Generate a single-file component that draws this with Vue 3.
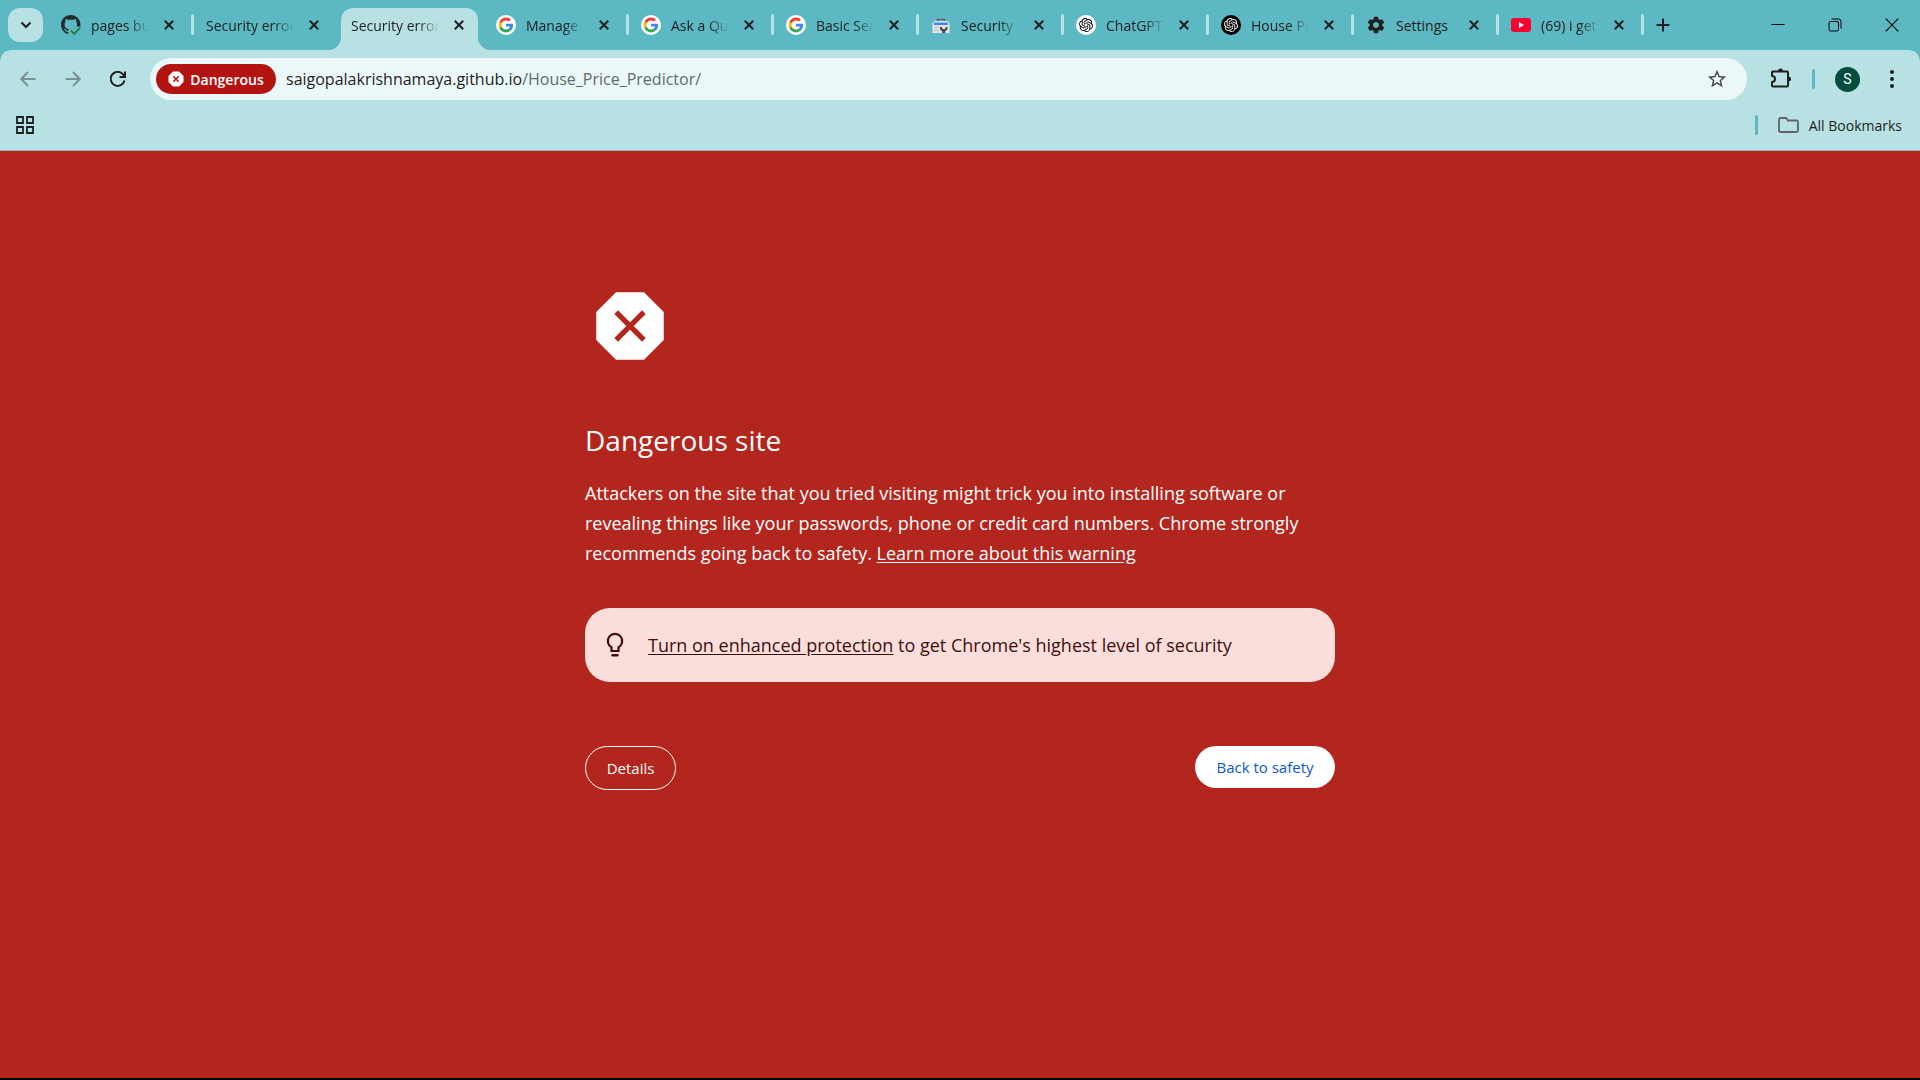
<template>
  <div class="browser">
    <header class="tab-strip">
      <button class="tab-search" aria-label="Search tabs">
        <svg width="12" height="8" viewBox="0 0 12 8"><path d="M1.5 1.5 6 6l4.5-4.5" fill="none" stroke="#1f1f1f" stroke-width="2" /></svg>
      </button>
      <nav class="tabs">
        <div
          v-for="(tab, index) in tabs"
          :key="index"
          class="tab"
          :class="{ active: index === activeTab, bare: index === activeTab - 1 || index === activeTab }"
          @click="activeTab = index"
        >
          <span v-if="tab.icon" class="favicon">
            <svg v-if="tab.icon === 'github'" viewBox="0 0 20 20">
              <path transform="scale(1.22)" d="M8 0C3.58 0 0 3.58 0 8c0 3.54 2.29 6.53 5.47 7.59.4.07.55-.17.55-.38 0-.19-.01-.82-.01-1.49-2.01.37-2.53-.49-2.69-.94-.09-.23-.48-.94-.82-1.13-.28-.15-.68-.52-.01-.53.63-.01 1.08.58 1.23.82.72 1.21 1.87.87 2.33.66.07-.52.28-.87.51-1.07-1.78-.2-3.64-.89-3.64-3.95 0-.87.31-1.59.82-2.15-.08-.2-.36-1.02.08-2.12 0 0 .67-.21 2.2.82.64-.18 1.32-.27 2-.27s1.36.09 2 .27c1.53-1.04 2.2-.82 2.2-.82.44 1.1.16 1.92.08 2.12.51.56.82 1.27.82 2.15 0 3.07-1.87 3.75-3.65 3.95.29.25.54.73.54 1.48 0 1.07-.01 1.93-.01 2.2 0 .21.15.46.55.38A8.01 8.01 0 0 0 16 8c0-4.42-3.58-8-8-8z" fill="#24292f" />
              <path d="M8.500 15.500 12 11.500h8V20H8.500z" fill="#5cb8c2" />
              <path d="m10 15.700 3.200 3.200 6-6.200" fill="none" stroke="#1a7f37" stroke-width="1.800" />
            </svg>
            <svg v-else-if="tab.icon === 'google'" viewBox="0 0 20 20">
              <circle cx="10" cy="10" r="10" fill="#fff" />
              <g transform="translate(2.600 2.600) scale(.308)">
                <path fill="#EA4335" d="M24 9.500c3.540 0 6.710 1.220 9.210 3.600l6.850-6.850C35.900 2.380 30.470 0 24 0 14.620 0 6.510 5.380 2.560 13.220l7.980 6.190C12.430 13.720 17.740 9.500 24 9.500z" />
                <path fill="#4285F4" d="M46.980 24.550c0-1.570-.15-3.090-.38-4.550H24v9.020h12.940c-.58 2.960-2.260 5.480-4.780 7.180l7.730 6c4.510-4.180 7.090-10.360 7.090-17.650z" />
                <path fill="#FBBC05" d="M10.530 28.590c-.48-1.450-.76-2.990-.76-4.590s.27-3.140.76-4.590l-7.980-6.190C.92 16.460 0 20.120 0 24s.92 7.540 2.560 10.780l7.970-6.190z" />
                <path fill="#34A853" d="M24 48c6.480 0 11.930-2.130 15.890-5.810l-7.730-6c-2.150 1.450-4.920 2.300-8.160 2.300-6.260 0-11.570-4.220-13.470-9.910l-7.980 6.190C6.510 42.620 14.620 48 24 48z" />
              </g>
            </svg>
            <svg v-else-if="tab.icon === 'console'" viewBox="0 0 20 20">
              <path d="M6.500 6.500V4.500h7v2" fill="none" stroke="#5f6368" stroke-width="1.500" />
              <path d="M3.500 6h13L18.500 8.500V18h-17V8.500z" fill="#e3e5e8" />
              <rect x="3" y="7.500" width="14" height="2.500" fill="#4285f4" />
              <path d="M3.500 12.500h4.500M3.500 15.500h4.500" stroke="#c3c6ca" stroke-width="1.500" />
              <path d="M9 12v2.500l2.200 1.800V18h3v-1.700l2.200-1.800V12h-2v2h-3.200v-2z" fill="#45484c" />
            </svg>
            <svg v-else-if="tab.icon === 'openai' || tab.icon === 'openai-dark'" viewBox="0 0 20 20">
              <circle cx="10" cy="10" r="10" :fill="tab.icon === 'openai' ? '#fff' : '#000'" />
              <path transform="translate(3 3) scale(.583)" :fill="tab.icon === 'openai' ? '#000' : '#fff'" d="M22.282 9.821a5.985 5.985 0 0 0-.516-4.911 6.046 6.046 0 0 0-6.510-2.900A6.065 6.065 0 0 0 4.981 4.182a5.985 5.985 0 0 0-3.998 2.900 6.046 6.046 0 0 0 .743 7.097 5.980 5.980 0 0 0 .511 4.911 6.051 6.051 0 0 0 6.515 2.900A5.985 5.985 0 0 0 13.260 24a6.056 6.056 0 0 0 5.772-4.206 5.990 5.990 0 0 0 3.998-2.900 6.056 6.056 0 0 0-.748-7.073zM13.260 22.430a4.476 4.476 0 0 1-2.876-1.041l.141-.080 4.779-2.758a.795.795 0 0 0 .393-.681v-6.737l2.020 1.169a.071.071 0 0 1 .038.052v5.583a4.504 4.504 0 0 1-4.495 4.493zM3.600 18.304a4.471 4.471 0 0 1-.535-3.014l.142.085 4.783 2.759a.771.771 0 0 0 .780 0l5.843-3.369v2.332a.080.080 0 0 1-.033.062L9.740 19.950a4.499 4.499 0 0 1-6.140-1.646zM2.341 7.896a4.485 4.485 0 0 1 2.365-1.973V11.600a.766.766 0 0 0 .388.677l5.814 3.354-2.020 1.169a.076.076 0 0 1-.071 0l-4.830-2.787A4.504 4.504 0 0 1 2.341 7.872zm16.596 3.856L13.104 8.364 15.119 7.200a.076.076 0 0 1 .071 0l4.830 2.791a4.494 4.494 0 0 1-.676 8.105v-5.678a.790.790 0 0 0-.407-.667zm2.011-3.023l-.142-.085-4.774-2.782a.776.776 0 0 0-.785 0L9.409 9.230V6.897a.066.066 0 0 1 .028-.061l4.830-2.787a4.499 4.499 0 0 1 6.681 4.660zM8.307 12.863l-2.020-1.164a.080.080 0 0 1-.038-.057V6.074a4.499 4.499 0 0 1 7.376-3.454l-.142.081L8.704 5.459a.795.795 0 0 0-.393.681zm1.097-2.365l2.602-1.500 2.607 1.500v2.999l-2.597 1.500-2.607-1.500z" />
            </svg>
            <svg v-else-if="tab.icon === 'settings'" viewBox="0 0 24 24">
              <path fill="#1f1f1f" d="M19.430 12.980c.04-.32.07-.64.07-.98s-.03-.66-.07-.98l2.110-1.650c.19-.15.24-.42.12-.64l-2-3.460c-.12-.22-.39-.3-.61-.22l-2.490 1c-.52-.4-1.080-.73-1.690-.98l-.38-2.650A.488.488 0 0 0 14 2h-4c-.25 0-.46.18-.49.42l-.38 2.650c-.61.25-1.170.59-1.690.98l-2.490-1c-.23-.09-.49 0-.61.22l-2 3.460c-.13.22-.07.49.12.64l2.110 1.650c-.04.32-.07.65-.07.98s.03.66.07.98l-2.110 1.650c-.19.15-.24.42-.12.64l2 3.460c.12.22.39.3.61.22l2.490-1c.52.4 1.080.73 1.690.98l.38 2.650c.03.24.24.42.49.42h4c.25 0 .46-.18.49-.42l.38-2.650c.61-.25 1.170-.59 1.690-.98l2.490 1c.23.09.49 0 .61-.22l2-3.460c.12-.22.07-.49-.12-.64l-2.110-1.650zM12 15.500c-1.930 0-3.500-1.570-3.500-3.500s1.570-3.500 3.500-3.500 3.500 1.570 3.500 3.500-1.570 3.500-3.500 3.500z" />
            </svg>
            <svg v-else viewBox="0 0 20 20">
              <rect y="3" width="20" height="14" rx="3" fill="#ff0033" />
              <path d="M8 7v6l5-3z" fill="#fff" />
            </svg>
          </span>
          <span class="tab-title" :class="{ fade: !tab.fits }">{{ tab.title }}</span>
          <button class="tab-close" aria-label="Close tab">
            <svg width="10" height="10" viewBox="0 0 10 10"><path d="M.8.8l8.400 8.400M9.200.8.8 9.200" stroke="#1f1f1f" stroke-width="2" /></svg>
          </button>
        </div>
      </nav>
      <button class="new-tab" aria-label="New tab">
        <svg width="14" height="14" viewBox="0 0 14 14"><path d="M7 .5v13M.5 7h13" stroke="#1f1f1f" stroke-width="2" /></svg>
      </button>
      <div class="window-controls">
        <button aria-label="Minimize">
          <svg width="14" height="14" viewBox="0 0 14 14"><path d="M.5 6.500h13" stroke="#000" /></svg>
        </button>
        <button aria-label="Restore">
          <svg width="14" height="14" viewBox="0 0 14 14" fill="none" stroke="#000"><rect x="1" y="3.500" width="9.500" height="9.500" rx="1.500" /><path d="M3.500 1h7A2.500 2.500 0 0 1 13 3.500v7" /></svg>
        </button>
        <button aria-label="Close window">
          <svg width="14" height="14" viewBox="0 0 14 14"><path d="M.7.7l12.600 12.600M13.300.7.7 13.300" stroke="#000" stroke-width="1.100" /></svg>
        </button>
      </div>
    </header>

    <div class="toolbar-area">
      <div class="toolbar">
        <button class="tool faded" aria-label="Back">
          <svg width="16" height="16" viewBox="0 0 16 16"><path d="M15.500 8H1.500M8 1 1.200 8 8 15" /></svg>
        </button>
        <button class="tool faded" aria-label="Forward">
          <svg width="16" height="16" viewBox="0 0 16 16"><path d="M.5 8h14M8 1l6.800 7L8 15" /></svg>
        </button>
        <button class="tool" aria-label="Reload">
          <svg width="16" height="16" viewBox="0 0 16 16"><path d="M14.500 9.500A7 7 0 1 1 13 3.300L14.500 5M15 .5v5.500H9.500" /></svg>
        </button>
        <div class="omnibox">
          <button class="chip">
            <svg width="16" height="16" viewBox="0 0 16 16">
              <path d="M5 .5h6L15.500 5v6L11 15.500H5L.5 11V5z" fill="#fff" />
              <path d="m5.300 5.300 5.400 5.400m0-5.400-5.400 5.400" stroke="#b31412" stroke-width="1.600" />
            </svg>
            Dangerous
          </button>
          <p class="url">saigopalakrishnamaya.github.io<span>/House_Price_Predictor/</span></p>
          <button class="star" aria-label="Bookmark this tab">
            <svg width="22" height="22" viewBox="0 0 24 24"><path fill="#474747" d="M22 9.240l-7.190-.62L12 2 9.190 8.630 2 9.240l5.460 4.730L5.820 21 12 17.270 18.180 21l-1.630-7.030L22 9.240zM12 15.400l-3.760 2.270 1-4.280-3.320-2.880 4.380-.38L12 6.100l1.710 4.040 4.380.38-3.320 2.880 1 4.280L12 15.400z" /></svg>
          </button>
        </div>
        <button class="tool extensions" aria-label="Extensions">
          <svg width="22" height="22" viewBox="0 0 22 22">
            <path d="M3 3.500h14a1 1 0 0 1 1 1v13a1 1 0 0 1-1 1H3a1 1 0 0 1-1-1v-3.500a3 3 0 0 0 0-6V4.500a1 1 0 0 1 1-1z" stroke-linejoin="round" />
            <path d="M8 3a2.500 2.500 0 0 1 5 0zM18.500 8.500a2.500 2.500 0 0 1 0 5z" class="solid" />
          </svg>
        </button>
        <span class="divider"></span>
        <button class="avatar" aria-label="Profile">S</button>
        <button class="tool menu" aria-label="Menu">
          <svg width="4" height="18" viewBox="0 0 4 18"><g fill="#1f1f1f" stroke="none"><circle cx="2" cy="2" r="2" /><circle cx="2" cy="9" r="2" /><circle cx="2" cy="16" r="2" /></g></svg>
        </button>
      </div>
      <div class="bookmarks">
        <button class="apps" aria-label="Tab groups">
          <svg width="18" height="18" viewBox="0 0 18 18" fill="none" stroke="#1f1f1f" stroke-width="1.800"><path d="M1 1h6v6H1zM11 1h6v6h-6zM1 11h6v6H1zM11 11h6v6h-6z" /></svg>
        </button>
        <span class="divider"></span>
        <button class="all-bookmarks">
          <svg width="21" height="16" viewBox="0 0 21 16" fill="none" stroke="#5f6368" stroke-width="1.800"><path d="M2.500 1H8l2 2.500h8.500A1.500 1.500 0 0 1 20 5v8.500a1.500 1.500 0 0 1-1.500 1.500h-16A1.500 1.500 0 0 1 1 13.500v-11A1.500 1.500 0 0 1 2.500 1z" /></svg>
          All Bookmarks
        </button>
      </div>
    </div>

    <main class="warning">
      <div class="content">
        <svg class="danger-icon" width="90" height="90" viewBox="0 0 24 24">
          <path d="M15.730 3H8.270L3 8.270v7.460L8.270 21h7.460L21 15.730V8.270z" fill="#fff" />
          <path d="m8.300 8.300 7.400 7.400m0-7.400-7.400 7.400" stroke="#b3261e" stroke-width="1.400" />
        </svg>
        <h1>Dangerous site</h1>
        <p class="message">
          Attackers on the site that you tried visiting might trick you into installing software or
          revealing things like your passwords, phone or credit card numbers. Chrome strongly
          recommends going back to safety. <a href="#">Learn more about this warning</a>
        </p>
        <div class="promo">
          <svg width="18" height="26" viewBox="0 0 18 26" fill="none" stroke="#410e0b">
            <path d="M5.500 19v-3.700A7.200 7.200 0 1 1 12.500 15.300V19z" stroke-width="2.200" />
            <path d="M6.500 23.200h5" stroke-width="2.400" stroke-linecap="round" />
          </svg>
          <p><a href="#">Turn on enhanced protection</a> to get Chrome's highest level of security</p>
        </div>
        <div class="actions">
          <button class="details">Details</button>
          <button class="safety">Back to safety</button>
        </div>
      </div>
    </main>
  </div>
</template>

<script setup>
import { ref } from 'vue'

const activeTab = ref(2)

const tabs = [
  { title: 'pages build', icon: 'github' },
  { title: 'Security error' },
  { title: 'Security error' },
  { title: 'Manage', icon: 'google' },
  { title: 'Ask a Question', icon: 'google' },
  { title: 'Basic Search', icon: 'google' },
  { title: 'Security', icon: 'console' },
  { title: 'ChatGPT', icon: 'openai' },
  { title: 'House Price', icon: 'openai-dark' },
  { title: 'Settings', icon: 'settings', fits: true },
  { title: '(69) i get', icon: 'youtube' }
]
</script>

<style>
body {
  margin: 0;
  background: #b3261e;
}
</style>

<style scoped>
.browser {
  display: flex;
  flex-direction: column;
  min-height: 100vh;
  font-family: "Segoe UI", "Open Sans", "Noto Sans", sans-serif;
  color: #1f1f1f;
}
button {
  display: flex;
  align-items: center;
  justify-content: center;
  padding: 0;
  border: none;
  background: none;
  font: inherit;
  color: inherit;
}
p,
h1 {
  margin: 0;
  font-weight: 400;
}
svg {
  display: block;
  flex-shrink: 0;
}

/* tabs */
.tab-strip {
  display: flex;
  align-items: center;
  height: 50px;
  padding-left: 8px;
  background: #5cb8c2;
}
.tab-search {
  width: 35px;
  height: 34px;
  margin-right: 6px;
  border-radius: 12px;
  background: #b8e1e4;
}
.tabs {
  display: flex;
  align-self: stretch;
}
.tab {
  position: relative;
  display: flex;
  align-items: center;
  box-sizing: border-box;
  width: 145px;
  padding: 0 20px 0 12px;
  font-size: 14px;
}
.tab::after {
  content: "";
  position: absolute;
  right: 0;
  top: 14px;
  width: 3px;
  height: 21px;
  border-radius: 2px;
  background: #b8e1e4;
}
.tab.bare::after {
  display: none;
}
.tab.active::before {
  content: "";
  position: absolute;
  inset: 8px 6px 0 2px;
  border-radius: 12px 12px 0 0;
  background: #b8e1e4;
}
/* curved feet of the active tab */
.tab.active::after {
  display: block;
  top: auto;
  bottom: 0;
  right: -8px;
  width: 165px;
  height: 14px;
  border-radius: 0;
  background:
    radial-gradient(circle at 0 0, transparent 14px, #b8e1e4 15px) left / 14px 14px no-repeat,
    radial-gradient(circle at 14px 0, transparent 14px, #b8e1e4 15px) right / 14px 14px no-repeat;
}
.favicon {
  width: 20px;
  height: 20px;
  margin-right: 10px;
  flex-shrink: 0;
}
.tab-title {
  position: relative;
  z-index: 1;
  flex: 1;
  min-width: 0;
  overflow: hidden;
  white-space: nowrap;
}
.tab-title.fade {
  mask-image: linear-gradient(to left, transparent, #000 20px);
}
.tab-close {
  position: relative;
  z-index: 1;
  width: 10px;
  height: 20px;
  margin-left: 15px;
}
.new-tab {
  width: 28px;
  height: 28px;
  margin-left: 5px;
}
.window-controls {
  display: flex;
  align-self: stretch;
  margin-left: auto;
}
.window-controls button {
  width: 57px;
}

/* toolbar */
.toolbar-area {
  position: relative;
  border-bottom: 1px solid #93b4b7;
  background: #b8e1e4;
}
.toolbar-area::before {
  content: "";
  position: absolute;
  inset: 0 0 auto;
  height: 10px;
  background:
    radial-gradient(circle at 10px 10px, transparent 9px, #5cb8c2 10px) left / 10px 10px no-repeat,
    radial-gradient(circle at 0 10px, transparent 9px, #5cb8c2 10px) right / 10px 10px no-repeat;
}
.toolbar {
  display: flex;
  align-items: center;
  padding: 8px 13px 0 5px;
}
.tool {
  width: 45px;
  height: 42px;
}
.tool svg {
  fill: none;
  stroke: #1f1f1f;
  stroke-width: 2;
}
.faded {
  opacity: 0.4;
}
.omnibox {
  display: flex;
  align-items: center;
  flex: 1;
  height: 42px;
  margin: 0 11px 0 10px;
  padding: 0 19px 0 6px;
  box-sizing: border-box;
  border-radius: 21px;
  background: #ecf8f8;
}
.chip {
  width: 120px;
  height: 30px;
  gap: 6px;
  border-radius: 15px;
  background: #b31412;
  color: #fff;
  font-size: 14px;
  font-weight: 600;
}
.url {
  flex: 1;
  margin-left: 10px;
  font-size: 16px;
}
.url span {
  color: #5f6b6c;
}
.extensions .solid {
  fill: #1f1f1f;
  stroke: none;
}
.divider {
  width: 3px;
  height: 20px;
  border-radius: 2px;
  background: #5cb8c2;
}
.toolbar .divider {
  margin-left: 9px;
}
.avatar {
  width: 25px;
  height: 25px;
  margin: 0 17px 0 20px;
  border-radius: 50%;
  background: #004d40;
  color: #fff;
  font-family: Roboto, sans-serif;
  font-size: 14px;
}
.menu {
  width: 30px;
}
.bookmarks {
  display: flex;
  align-items: center;
  height: 50px;
  padding: 0 18px 0 16px;
}
.apps {
  margin-right: auto;
}
.all-bookmarks {
  gap: 10px;
  margin-left: 20px;
  font-size: 14px;
}

/* interstitial */
.warning {
  flex: 1;
  padding: 130px 24px 0;
  border-bottom: 2px solid #000;
  background: #b3261e;
  color: #fff;
}
.content {
  max-width: 750px;
  margin: 0 auto;
}
h1 {
  margin-top: 49px;
  font-size: 28px;
  line-height: 40px;
}
.message {
  margin-top: 18px;
  font-size: 18px;
  line-height: 30px;
}
a {
  color: inherit;
  text-underline-offset: 2px;
}
.promo {
  display: flex;
  align-items: center;
  gap: 24px;
  height: 74px;
  margin-top: 40px;
  padding: 0 21px;
  border-radius: 25px;
  background: #f9dedc;
  color: #410e0b;
  font-size: 18px;
}
.actions {
  display: flex;
  align-items: flex-start;
  justify-content: space-between;
  margin-top: 64px;
  font-size: 15px;
}
.details {
  box-sizing: border-box;
  width: 91px;
  height: 44px;
  border: 1px solid #fff;
  border-radius: 22px;
}
.safety {
  width: 140px;
  height: 42px;
  border-radius: 21px;
  background: #fff;
  color: #0b57d0;
}
</style>
